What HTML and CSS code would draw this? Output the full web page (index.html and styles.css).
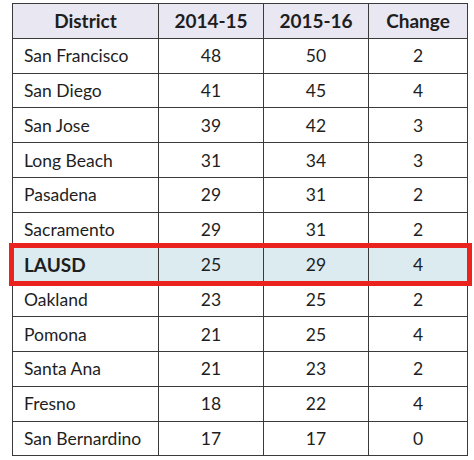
FILE: index.html
```html
<!DOCTYPE html>
<html>
<head>
    <meta charset="UTF-8">
    <title>District scores</title>
    <link rel="stylesheet" href="styles.css">
</head>
<body>
<div class="sheet">
    <table class="scoreTable">
        <tr class="headRow">
            <th class="colName">District</th>
            <th>2014-15</th>
            <th>2015-16</th>
            <th>Change</th>
        </tr>
        <tr><td class="name">San Francisco</td><td>48</td><td>50</td><td>2</td></tr>
        <tr><td class="name">San Diego</td><td>41</td><td>45</td><td>4</td></tr>
        <tr><td class="name">San Jose</td><td>39</td><td>42</td><td>3</td></tr>
        <tr><td class="name">Long Beach</td><td>31</td><td>34</td><td>3</td></tr>
        <tr><td class="name">Pasadena</td><td>29</td><td>31</td><td>2</td></tr>
        <tr><td class="name">Sacramento</td><td>29</td><td>31</td><td>2</td></tr>
        <!-- highlighted row -->
        <tr class="focusRow"><td class="name">LAUSD</td><td>25</td><td>29</td><td>4</td></tr>
        <tr><td class="name">Oakland</td><td>23</td><td>25</td><td>2</td></tr>
        <tr><td class="name">Pomona</td><td>21</td><td>25</td><td>4</td></tr>
        <tr><td class="name">Santa Ana</td><td>21</td><td>23</td><td>2</td></tr>
        <tr><td class="name">Fresno</td><td>18</td><td>22</td><td>4</td></tr>
        <tr><td class="name">San Bernardino</td><td>17</td><td>17</td><td>0</td></tr>
    </table>
</div>
</body>
</html>
```

FILE: styles.css
```css
body {
    margin: 0;
    background: #ffffff;
    font-family: Lato, "Open Sans", sans-serif;
}

.sheet {
    padding: 3px 0 0 12px;
}

.scoreTable {
    width: 456px;
    border-collapse: collapse;
    table-layout: fixed;
    color: #1e1e1e;
    font-size: 17.5px;
}

.scoreTable th,
.scoreTable td {
    height: 33.8px;
    padding: 0;
    border: 1.5px solid #3a3a3a;
    text-align: center;
}

.scoreTable th {
    background: #e9e7f1;
    font-weight: bold;
    font-size: 19px;
}

.colName {
    width: 145px;
}

.scoreTable th:nth-child(2),
.scoreTable th:nth-child(3) {
    width: 104px;
}

.scoreTable td.name {
    text-align: left;
    padding-left: 11px;
}

.focusRow td {
    background: #dcebf0;
}

.focusRow td.name {
    font-weight: bold;
    font-size: 19px;
}

.focusRow {
    outline: 5px solid #ea231e;
    outline-offset: -1px;
}
```
